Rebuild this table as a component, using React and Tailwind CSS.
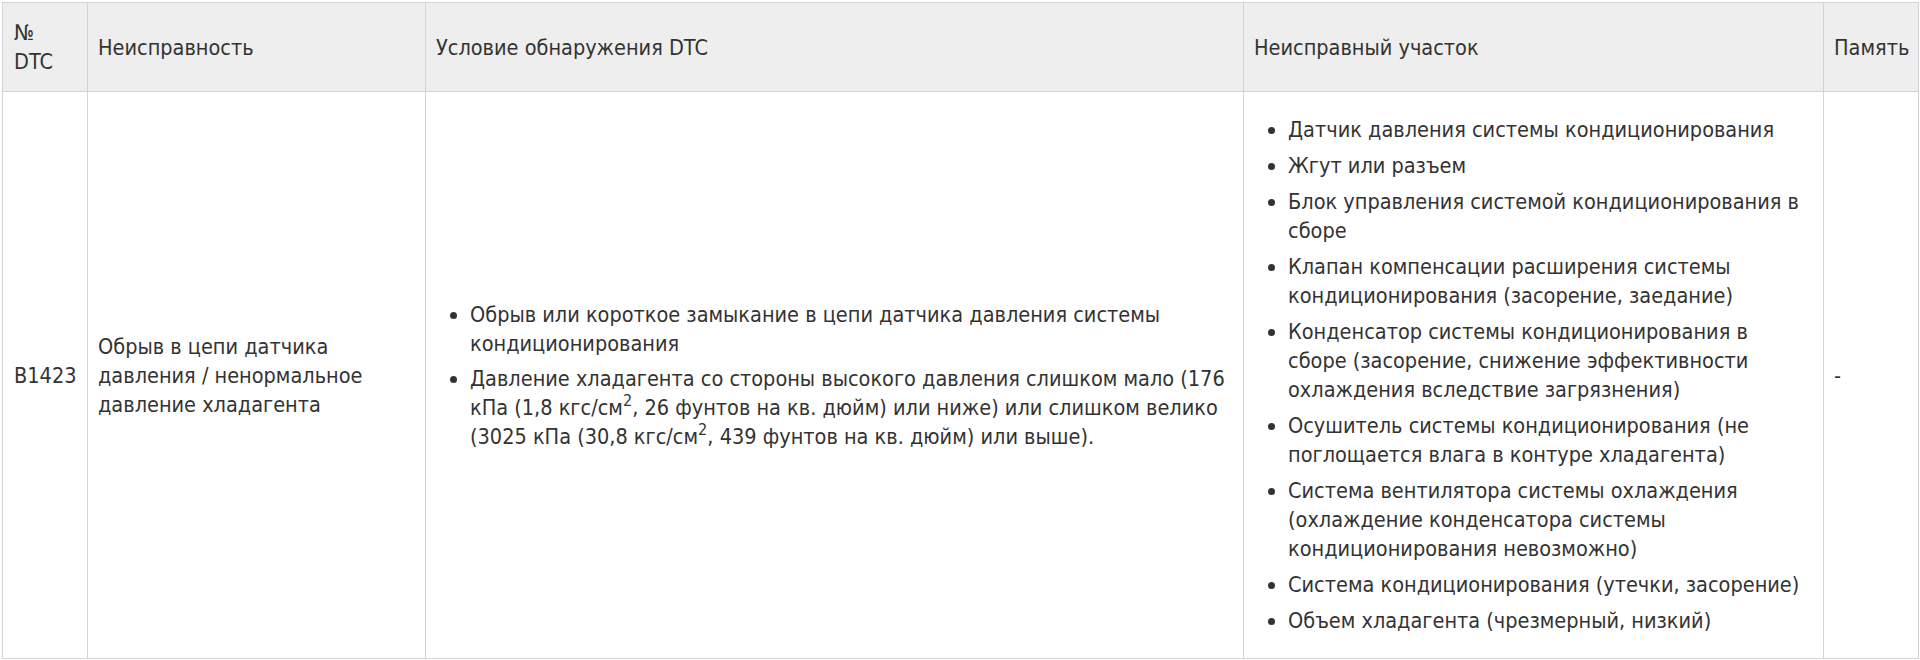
import React from "react";

const cond = [
  <>Обрыв или короткое замыкание в цепи датчика давления системы кондиционирования</>,
  <>
    Давление хладагента со стороны высокого давления слишком мало (176 кПа (1,8 кгс/см<sup>2</sup>, 26 фунтов на кв. дюйм) или ниже) или слишком велико (3025 кПа (30,8 кгс/см<sup>2</sup>, 439 фунтов на кв. дюйм) или выше).
  </>,
];

const parts = [
  "Датчик давления системы кондиционирования",
  "Жгут или разъем",
  "Блок управления системой кондиционирования в сборе",
  "Клапан компенсации расширения системы кондиционирования (засорение, заедание)",
  "Конденсатор системы кондиционирования в сборе (засорение, снижение эффективности охлаждения вследствие загрязнения)",
  "Осушитель системы кондиционирования (не поглощается влага в контуре хладагента)",
  "Система вентилятора системы охлаждения (охлаждение конденсатора системы кондиционирования невозможно)",
  "Система кондиционирования (утечки, засорение)",
  "Объем хладагента (чрезмерный, низкий)",
];

export default function App() {
  return (
    <div className="bg-white w-[1920px] h-[660px] overflow-hidden pt-[2px] pl-[2px]">
      <table
        className="table-fixed border-collapse w-[1916px] text-[21.5px] leading-[29px] text-[#333333]"
        style={{ fontFamily: '"DejaVu Sans Condensed", "DejaVu Sans", sans-serif', fontStretch: "condensed" }}
      >
        <colgroup>
          <col className="w-[85px]" />
          <col className="w-[338px]" />
          <col className="w-[818px]" />
          <col className="w-[580px]" />
          <col className="w-[95px]" />
        </colgroup>
        <thead>
          <tr className="bg-[#eeeeee]">
            <th className="border border-[#d4d4d4] px-[11px] py-[15px] text-left font-normal align-middle">
              №<br />DTC
            </th>
            <th className="border border-[#d4d4d4] px-[10px] py-[15px] text-left font-normal align-middle">
              Неисправность
            </th>
            <th className="border border-[#d4d4d4] px-[10px] py-[15px] text-left font-normal align-middle">
              Условие обнаружения DTC
            </th>
            <th className="border border-[#d4d4d4] px-[10px] py-[15px] text-left font-normal align-middle">
              Неисправный участок
            </th>
            <th className="border border-[#d4d4d4] px-[10px] py-[15px] text-left font-normal align-middle">
              Память
            </th>
          </tr>
        </thead>
        <tbody>
          <tr>
            <td className="border border-[#d4d4d4] px-[11px] py-[16px] align-middle">B1423</td>
            <td className="border border-[#d4d4d4] px-[10px] py-[16px] align-middle">
              Обрыв в цепи датчика давления / ненормальное давление хладагента
            </td>
            <td className="border border-[#d4d4d4] pl-[10px] pr-[10px] py-[16px] align-middle">
              <ul className="list-disc pl-[34px] my-[7px] flex flex-col gap-[6px]">
                {cond.map((c, i) => (
                  <li key={i}>{c}</li>
                ))}
              </ul>
            </td>
            <td className="border border-[#d4d4d4] pl-[10px] pr-[15px] py-[16px] align-middle">
              <ul className="list-disc pl-[34px] my-[7px] flex flex-col gap-[7px]">
                {parts.map((p, i) => (
                  <li key={i}>{p}</li>
                ))}
              </ul>
            </td>
            <td className="border border-[#d4d4d4] px-[10px] py-[16px] align-middle">-</td>
          </tr>
        </tbody>
      </table>
    </div>
  );
}
